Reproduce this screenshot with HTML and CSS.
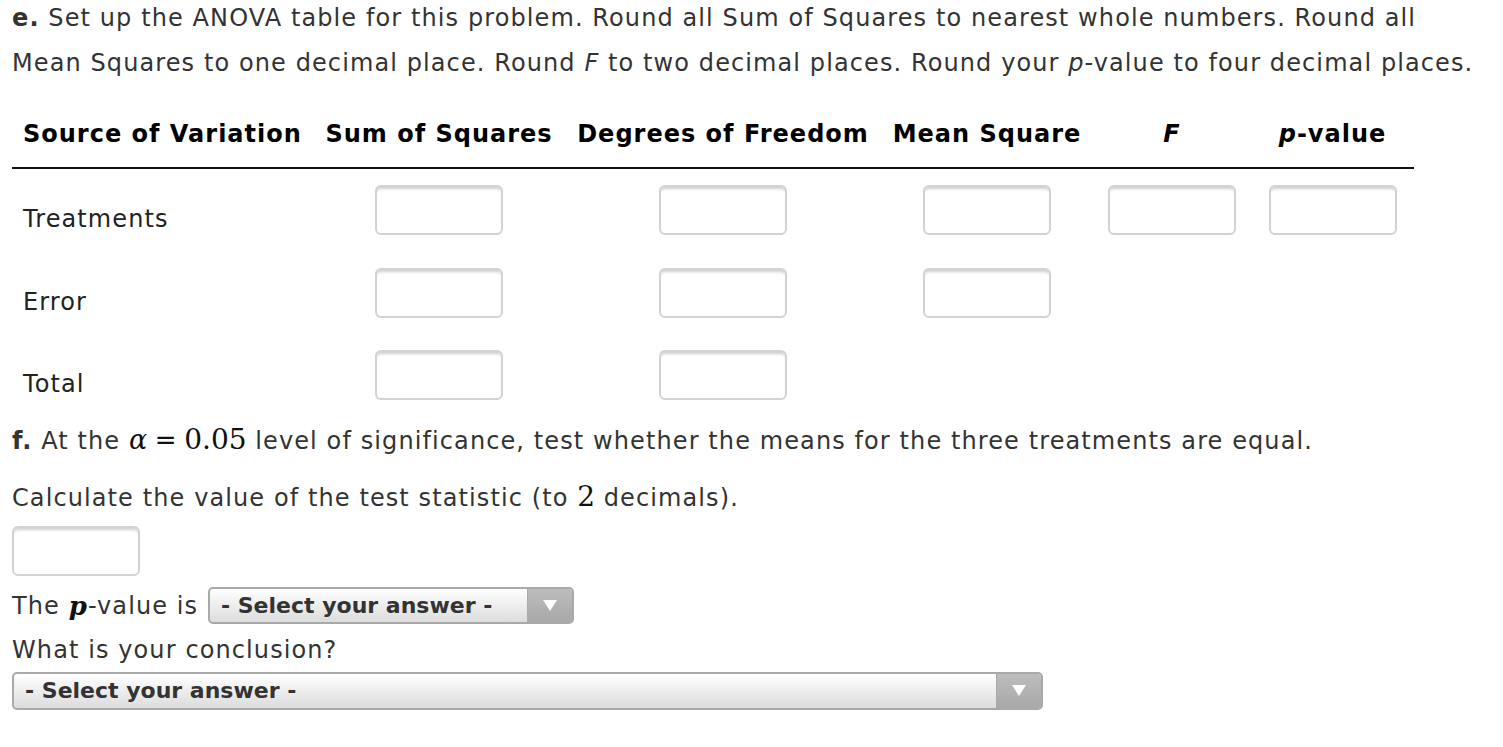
FILE: index.html
```html
<!DOCTYPE html>
<html>
<head>
<meta charset="utf-8">
<link rel="stylesheet" href="styles.css">
</head>
<body>
<p class="intro"><b>e.</b> Set up the ANOVA table for this problem. Round all Sum of Squares to nearest whole numbers. Round all<br>Mean Squares to one decimal place. Round <i>F</i> to two decimal places. Round your <i>p</i>-value to four decimal places.</p>
<table class="anova">
  <colgroup>
    <col class="c1"><col class="c2"><col class="c3"><col class="c4"><col class="c5"><col class="c6">
  </colgroup>
  <thead>
    <tr>
      <th class="left">Source of Variation</th>
      <th>Sum of Squares</th>
      <th>Degrees of Freedom</th>
      <th>Mean Square</th>
      <th><i>F</i></th>
      <th><i>p</i>-value</th>
    </tr>
  </thead>
  <tbody>
    <tr>
      <td class="label">Treatments</td>
      <td><span class="box"></span></td>
      <td><span class="box"></span></td>
      <td><span class="box"></span></td>
      <td><span class="box"></span></td>
      <td><span class="box"></span></td>
    </tr>
    <tr>
      <td class="label">Error</td>
      <td><span class="box"></span></td>
      <td><span class="box"></span></td>
      <td><span class="box"></span></td>
      <td></td>
      <td></td>
    </tr>
    <tr>
      <td class="label">Total</td>
      <td><span class="box"></span></td>
      <td><span class="box"></span></td>
      <td></td>
      <td></td>
      <td></td>
    </tr>
  </tbody>
</table>
<p class="part"><b>f.</b> At the <span class="math"><i class="alpha">α</i> <span class="eq">=</span> <span class="num">0.05</span></span> level of significance, test whether the means for the three treatments are equal.</p>
<p class="calc">Calculate the value of the test statistic (to <span class="num">2</span> decimals).</p>
<div class="single"><span class="box"></span></div>
<div class="pline">The <i class="mp">p</i>-value is <span class="sel small"><span class="seltext">- Select your answer -</span><span class="arrow"><svg width="16" height="13" viewBox="0 0 16 13"><path d="M1 1 L15 1 L8 12 Z" fill="#fff"/></svg></span></span></div>
<div class="qline">What is your conclusion?</div>
<div class="sel wide"><span class="seltext">- Select your answer -</span><span class="arrow"><svg width="16" height="13" viewBox="0 0 16 13"><path d="M1 1 L15 1 L8 12 Z" fill="#fff"/></svg></span></div>
</body>
</html>
```
FILE: styles.css
```css
body {
  margin: 0;
  padding: 0 12px;
  font-family: "DejaVu Sans", Verdana, sans-serif;
  font-size: 24px;
  letter-spacing: 1.1px;
  color: #333;
  background: #fff;
}
p { margin: 0; }
.intro {
  line-height: 45px;
  margin-top: -4px;
  white-space: nowrap;
}
.anova {
  border-collapse: collapse;
  table-layout: fixed;
  width: 1402px;
  margin-top: 16px;
}
.c1 { width: 301px; }
.c2 { width: 252px; }
.c3 { width: 316px; }
.c4 { width: 212px; }
.c5 { width: 158px; }
.c6 { width: 163px; }
.anova th {
  font-family: "DejaVu Sans", sans-serif;
  font-weight: bold;
  letter-spacing: 1px;
  color: #000;
  font-size: 24px;
  line-height: 30px;
  padding: 17px 0 18px;
  text-align: center;
  white-space: nowrap;
  border-bottom: 2px solid #111;
}
.anova th.left { text-align: left; padding-left: 11px; }
.anova td {
  padding: 16px 0 16.5px;
  text-align: center;
  vertical-align: top;
}
.anova td.label {
  text-align: left;
  padding: 35px 0 17.5px 11px;
  line-height: 30px;
  color: #222;
}
.box {
  display: block;
  margin: 0 auto;
  width: 128px;
  height: 50px;
  box-sizing: border-box;
  border: 2px solid #d2d2d2;
  border-radius: 6px;
  background: #fff;
  box-shadow: inset 0 4px 3px -2px #cfcfcf;
}
.single .box { margin: 0; }
.part {
  line-height: 45px;
  white-space: nowrap;
}
.calc {
  line-height: 45px;
  margin-top: 10px;
}
.math { white-space: nowrap; letter-spacing: 0; }
.alpha {
  font-family: "DejaVu Serif", "Liberation Serif", serif;
  font-size: 27px;
  color: #111;
}
.eq { font-family: "DejaVu Sans", sans-serif; font-size: 26px; color: #111; }
.num {
  font-family: "DejaVu Serif", "Liberation Serif", serif;
  font-size: 28px;
  letter-spacing: 0;
  color: #111;
}
.single { margin-top: 5px; height: 50px; }
.pline {
  display: flex;
  align-items: center;
  height: 46px;
  margin-top: 7px;
  white-space: pre;
}
.mp {
  font-family: "DejaVu Serif", "Liberation Serif", serif;
  font-weight: bold;
  font-size: 26px;
  color: #111;
}
.sel {
  display: inline-flex;
  box-sizing: border-box;
  border: 2px solid #a9a9a9;
  border-radius: 5px;
  background: linear-gradient(#ffffff, #dcdcdc);
  overflow: hidden;
  font-weight: bold;
  font-size: 22px;
  letter-spacing: 0;
  color: #333;
  align-items: stretch;
}
.sel.small { width: 366px; height: 37px; margin-left: 1px; }
.sel.wide { width: 1031px; height: 38px; }
.seltext {
  flex: 1;
  display: flex;
  align-items: center;
  padding-left: 11px;
  white-space: nowrap;
}
.arrow {
  width: 44px;
  display: flex;
  align-items: center;
  justify-content: center;
  background: linear-gradient(#bdbdbd, #a8a8a8);
  border-left: 1px solid #aaa;
}
.qline {
  line-height: 43px;
  height: 43px;
}
```
